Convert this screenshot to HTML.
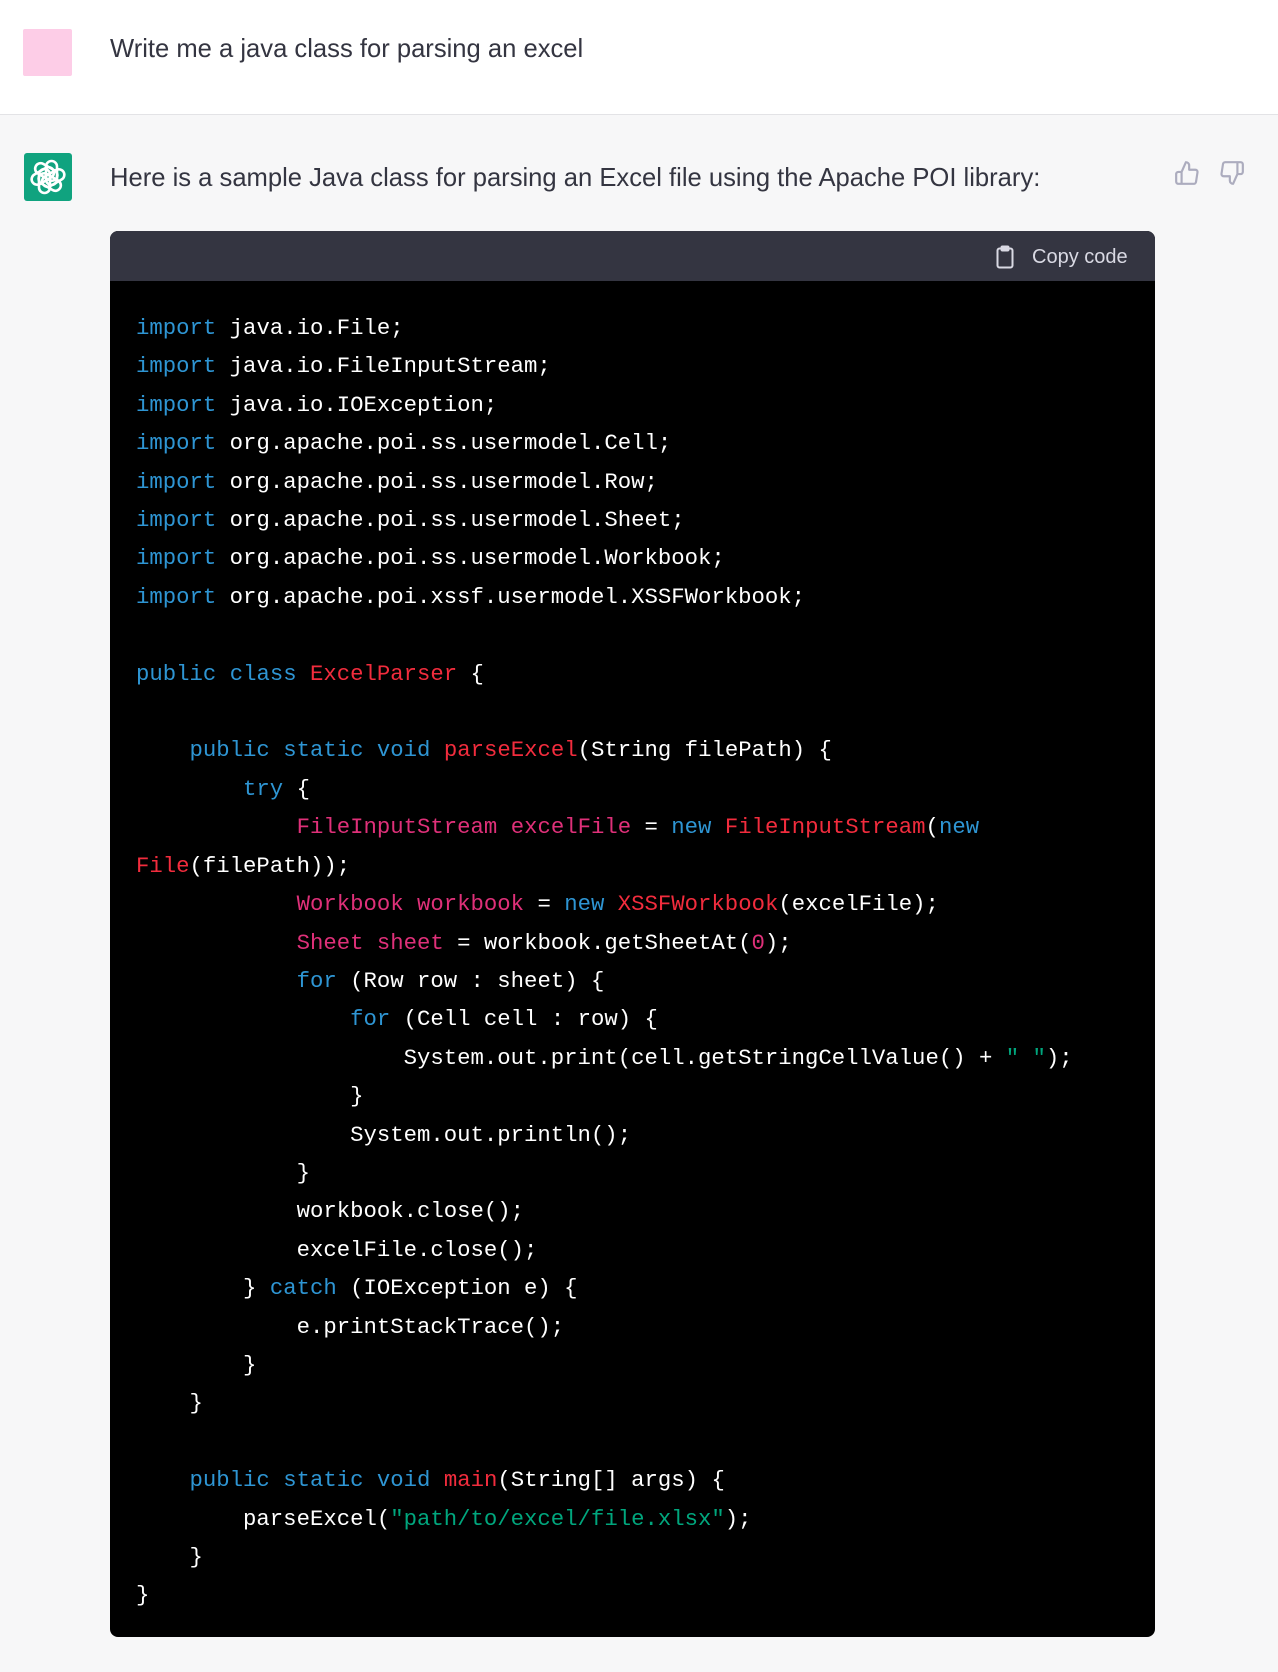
<!DOCTYPE html>
<html><head><meta charset="utf-8"><style>
*{margin:0;padding:0;box-sizing:border-box}
html,body{width:1278px;height:1672px;overflow:hidden;background:#f7f7f8;font-family:"Liberation Sans",Arial,sans-serif}
.top{position:absolute;left:0;top:0;width:1278px;height:115px;background:#fff;border-bottom:1px solid #e3e3e6}
.av{position:absolute;left:23px;top:29px;width:49px;height:47px;background:#fdcde7;border-radius:2px}
.q{position:absolute;left:110px;top:35px;font-size:25.6px;color:#343541;white-space:nowrap}
.logo{position:absolute;left:24px;top:153px;width:48px;height:48px;background:#10a37f;border-radius:3px}
.a{position:absolute;left:110px;top:164px;font-size:25.6px;color:#343541;white-space:nowrap}
.th{position:absolute;top:160px}
.code{position:absolute;left:110px;top:231px;width:1045px;height:1406px;background:#000;border-radius:8px;overflow:hidden}
.hd{height:50px;background:#343541;position:relative}
.cp{position:absolute;left:922px;top:15px;color:#d9d9e3;font-size:20px;white-space:nowrap}
pre{position:absolute;left:26px;top:78px;font-family:"Liberation Mono",monospace;font-size:22.3px;line-height:38.4px;color:#fff;white-space:pre}
.k{color:#2e95d3}.r{color:#f22c3d}.p{color:#df3079}.g{color:#00a67d}
</style></head><body>
<div class="top"><div class="av"></div><div class="q">Write me a java class for parsing an excel</div></div>
<div class="logo"><svg width="48" height="48" viewBox="0 0 48 48" fill="none" stroke="#fff" stroke-width="2.6">
<g transform="translate(24 24)">
<rect x="-2" y="-16" width="11" height="24" rx="5.5" transform="rotate(0)"/>
<rect x="-2" y="-16" width="11" height="24" rx="5.5" transform="rotate(60)"/>
<rect x="-2" y="-16" width="11" height="24" rx="5.5" transform="rotate(120)"/>
<rect x="-2" y="-16" width="11" height="24" rx="5.5" transform="rotate(180)"/>
<rect x="-2" y="-16" width="11" height="24" rx="5.5" transform="rotate(240)"/>
<rect x="-2" y="-16" width="11" height="24" rx="5.5" transform="rotate(300)"/>
</g></svg></div>
<div class="a">Here is a sample Java class for parsing an Excel file using the Apache POI library:</div>
<svg class="th" style="left:1174px" width="26" height="26" viewBox="0 0 24 24" fill="none" stroke="#acacbe" stroke-width="2" stroke-linejoin="round"><path d="M7 22H4a2 2 0 0 1-2-2v-7a2 2 0 0 1 2-2h3M14 9V5a3 3 0 0 0-3-3l-4 9v11h11.3a2 2 0 0 0 2-1.7l1.4-9a2 2 0 0 0-2-2.3z"/></svg>
<svg class="th" style="left:1219px" width="26" height="26" viewBox="0 0 24 24" fill="none" stroke="#acacbe" stroke-width="2" stroke-linejoin="round"><path d="M17 2h3a2 2 0 0 1 2 2v7a2 2 0 0 1-2 2h-3M10 15v4a3 3 0 0 0 3 3l4-9V2H5.7a2 2 0 0 0-2 1.7l-1.4 9a2 2 0 0 0 2 2.3z"/></svg>
<div class="code"><div class="hd">
<svg style="position:absolute;left:886px;top:14px" width="18" height="24" viewBox="0 0 18 24" fill="none" stroke="#d9d9e3" stroke-width="2"><rect x="1.5" y="3.5" width="15" height="19" rx="2"/><rect x="5.5" y="1.5" width="7" height="4" rx="1"/></svg>
<div class="cp">Copy code</div></div>
<pre><span class="k">import</span> java.io.File;
<span class="k">import</span> java.io.FileInputStream;
<span class="k">import</span> java.io.IOException;
<span class="k">import</span> org.apache.poi.ss.usermodel.Cell;
<span class="k">import</span> org.apache.poi.ss.usermodel.Row;
<span class="k">import</span> org.apache.poi.ss.usermodel.Sheet;
<span class="k">import</span> org.apache.poi.ss.usermodel.Workbook;
<span class="k">import</span> org.apache.poi.xssf.usermodel.XSSFWorkbook;

<span class="k">public</span> <span class="k">class</span> <span class="r">ExcelParser</span> {

    <span class="k">public</span> <span class="k">static</span> <span class="k">void</span> <span class="r">parseExcel</span>(String filePath) {
        <span class="k">try</span> {
            <span class="p">FileInputStream</span> <span class="p">excelFile</span> = <span class="k">new</span> <span class="r">FileInputStream</span>(<span class="k">new</span>
<span class="r">File</span>(filePath));
            <span class="p">Workbook</span> <span class="p">workbook</span> = <span class="k">new</span> <span class="r">XSSFWorkbook</span>(excelFile);
            <span class="p">Sheet</span> <span class="p">sheet</span> = workbook.getSheetAt(<span class="p">0</span>);
            <span class="k">for</span> (Row row : sheet) {
                <span class="k">for</span> (Cell cell : row) {
                    System.out.print(cell.getStringCellValue() + <span class="g">" "</span>);
                }
                System.out.println();
            }
            workbook.close();
            excelFile.close();
        } <span class="k">catch</span> (IOException e) {
            e.printStackTrace();
        }
    }

    <span class="k">public</span> <span class="k">static</span> <span class="k">void</span> <span class="r">main</span>(String[] args) {
        parseExcel(<span class="g">"path/to/excel/file.xlsx"</span>);
    }
}</pre>
</div>
</body></html>
